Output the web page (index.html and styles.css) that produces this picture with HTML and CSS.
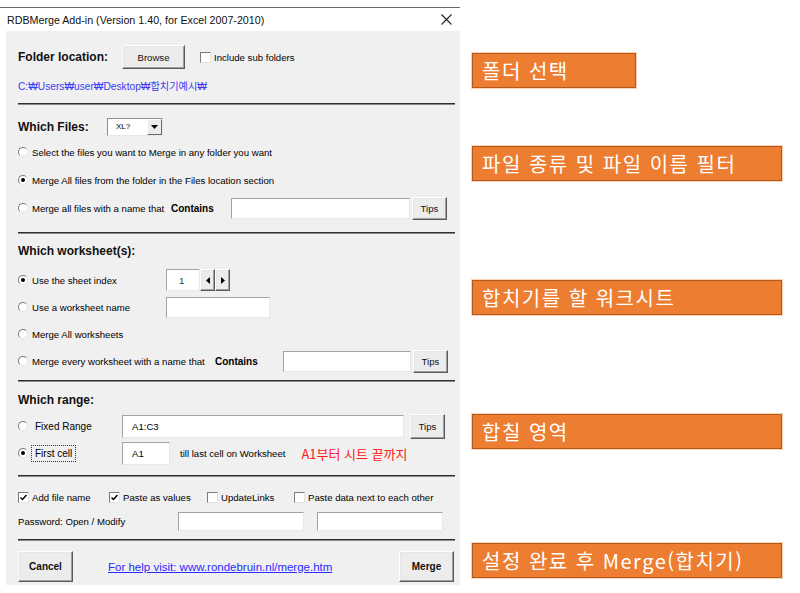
FILE: index.html
```html
<!DOCTYPE html>
<html lang="ko">
<head>
<meta charset="utf-8">
<title>RDBMerge Add-in</title>
<link rel="stylesheet" href="styles.css">
</head>
<body>
<div class="page">
  <div class="dialog">
    <div class="topstrip"></div>
    <div class="titlebar">
      <span class="title">RDBMerge Add-in (Version 1.40, for Excel 2007-2010)</span>
      <svg class="close" width="11" height="11" viewBox="0 0 11 11"><path d="M0.5 0.5 L10.5 10.5 M10.5 0.5 L0.5 10.5" stroke="#222" stroke-width="1.1" fill="none"/></svg>
    </div>
    <div class="client">
      <section class="sec s1">
        <div class="row r26">
          <span class="heading w-folder">Folder location:</span>
          <span class="btn browse">Browse</span>
          <span class="chk ml15"></span><span class="txt">Include sub folders</span>
        </div>
        <div class="row r30"><span class="path">C:₩Users₩user₩Desktop₩합치기예시₩</span></div>
      </section>
      <div class="sep"></div>

      <section class="sec s2">
        <div class="row r23">
          <span class="heading w-files">Which Files:</span>
          <span class="combo"><span class="combo-text">XL?</span><span class="combo-btn"><svg width="7" height="4" viewBox="0 0 7 4"><path d="M0 0 H7 L3.5 4 Z" fill="#000"/></svg></span></span>
        </div>
        <div class="row r28"><span class="radio"></span><span class="txt">Select the files you want to Merge in any folder you want</span></div>
        <div class="row r28"><span class="radio on"></span><span class="txt">Merge All files from the folder in the Files location section</span></div>
        <div class="row r28">
          <span class="radio"></span><span class="txt w-files-name">Merge all files with a name that</span>
          <span class="bold w-contains">Contains</span>
          <span class="input w-files-input"></span>
          <span class="btn tips">Tips</span>
        </div>
      </section>
      <div class="sep"></div>

      <section class="sec s3">
        <div class="row r22"><span class="heading">Which worksheet(s):</span></div>
        <div class="rows3">
          <div class="row r26">
            <span class="radio on"></span><span class="txt w-ws">Use the sheet index</span>
            <span class="input spin-input"><span class="num">1</span></span>
            <span class="btn spin"><svg width="4" height="7" viewBox="0 0 4 7"><path d="M4 0 V7 L0 3.5 Z" fill="#000"/></svg></span>
            <span class="btn spin"><svg width="4" height="7" viewBox="0 0 4 7"><path d="M0 0 V7 L4 3.5 Z" fill="#000"/></svg></span>
          </div>
          <div class="row r26">
            <span class="radio"></span><span class="txt w-ws">Use a worksheet name</span>
            <span class="input w-wsname"></span>
          </div>
          <div class="row r26"><span class="radio"></span><span class="txt">Merge All worksheets</span></div>
          <div class="row r26">
            <span class="radio"></span><span class="txt w-every">Merge every worksheet with a name that</span>
            <span class="bold w-contains2">Contains</span>
            <span class="input w-ws-input"></span>
            <span class="btn tips">Tips</span>
          </div>
        </div>
      </section>
      <div class="sep"></div>

      <section class="sec s4">
        <div class="row r22"><span class="heading">Which range:</span></div>
        <div class="row r26 mt2">
          <span class="radio"></span><span class="txt w-range pl3">Fixed Range</span>
          <span class="input w-fixed"><span class="val">A1:C3</span></span>
          <span class="btn tips tips-lg">Tips</span>
        </div>
        <div class="row r26 mt1">
          <span class="radio on"></span><span class="w-range"><span class="focus">First cell</span></span>
          <span class="input w-first"><span class="val">A1</span></span>
          <span class="txt ml10">till last cell on Worksheet</span>
          <span class="red">A1부터 시트 끝까지</span>
        </div>
      </section>
      <div class="sep"></div>

      <section class="sec s5">
        <div class="row r20">
          <span class="opt w-o1"><span class="chk checked"><svg width="7" height="7" viewBox="0 0 7 7"><path d="M0.5 3.5 L2.5 5.5 L6.5 1" stroke="#000" stroke-width="1.5" fill="none"/></svg></span><span class="txt">Add file name</span></span>
          <span class="opt w-o2"><span class="chk checked"><svg width="7" height="7" viewBox="0 0 7 7"><path d="M0.5 3.5 L2.5 5.5 L6.5 1" stroke="#000" stroke-width="1.5" fill="none"/></svg></span><span class="txt">Paste as values</span></span>
          <span class="opt w-o3"><span class="chk"></span><span class="txt">UpdateLinks</span></span>
          <span class="opt"><span class="chk"></span><span class="txt">Paste data next to each other</span></span>
        </div>
        <div class="row r20 mt4">
          <span class="txt w-pass">Password: Open / Modify</span>
          <span class="input w-pw"></span>
          <span class="input w-pw ml13"></span>
        </div>
      </section>
      <div class="sep"></div>

      <section class="sec s6">
        <div class="row r31">
          <span class="btn big cancel">Cancel</span>
          <span class="link">For help visit: www.rondebruin.nl/merge.htm</span>
          <span class="btn big merge">Merge</span>
        </div>
      </section>
    </div>
  </div>

  <div class="notes">
    <div class="note n1">폴더 선택</div>
    <div class="note n2">파일 종류 및 파일 이름 필터</div>
    <div class="note n3">합치기를 할 워크시트</div>
    <div class="note n4">합칠 영역</div>
    <div class="note n5">설정 완료 후 Merge(합치기)</div>
  </div>
</div>
</body>
</html>
```

FILE: styles.css
```css
* { box-sizing: border-box; }
html, body { margin: 0; padding: 0; background: #fff; }
body {
  font-family: "Liberation Sans", "Noto Sans CJK KR", sans-serif;
  color: #000;
}
.page { display: flex; width: 800px; height: 593px; overflow: hidden; }

/* dialog */
.dialog { width: 460px; flex: none; }
.topstrip { height: 8px; border-bottom: 1px solid #6a6a6a; }
.titlebar {
  height: 23px; display: flex; align-items: center; justify-content: space-between;
  padding: 0 8px 0 7px; background: #fff;
}
.title { font-family: "Liberation Sans", sans-serif; font-size: 10.7px; color: #111; }
.close { display: block; }
.client {
  margin-left: 6px; background: #f0f0f0; padding: 13px 5px 3px 12px;
  font-size: 9.6px;
}
.sep { height: 2px; background: #2e2e2e; border-bottom: 1px solid #8a8a8a; }
.row { display: flex; align-items: center; }
.r20 { height: 20px; } .r22 { height: 22px; } .r23 { height: 23px; }
.r26 { height: 26px; } .r28 { height: 28px; } .r30 { height: 30px; } .r31 { height: 31px; }
.mt1 { margin-top: 1px; } .mt2 { margin-top: 2px; } .mt4 { margin-top: 4px; }
.ml10 { margin-left: 10px; } .ml13 { margin-left: 13px; } .ml15 { margin-left: 15px; }
.pl3 { padding-left: 3px; }

.s1 { padding-bottom: 3px; }
.s2 { padding-top: 10px; padding-bottom: 10px; }
.s3 { padding-top: 6px; padding-bottom: 6px; }
.rows3 { margin-top: 5px; display: flex; flex-direction: column; gap: 1px; }
.s4 { padding-top: 7px; padding-bottom: 9px; }
.s5 { padding-top: 10px; padding-bottom: 8px; }
.s6 { padding-top: 10px; padding-bottom: 0; margin-right: -5px; padding-right: 6px; }

.heading { font-size: 12px; font-weight: bold; color: #111; }
.w-folder { width: 104px; }
.w-files { width: 89px; }
.bold { font-weight: bold; font-size: 10px; }
.txt { white-space: nowrap; }
.path { font-size: 10.2px; color: #3c3cf5; }

/* buttons */
.btn {
  display: inline-flex; align-items: center; justify-content: center;
  background: #ececec; border: 1px solid; border-color: #fff #5a5a5a #5a5a5a #fff;
  box-shadow: inset -1px -1px #a0a0a0, inset 1px 1px #e6e6e6;
  font-size: 9.6px; color: #111;
}
.browse { width: 63px; height: 24px; margin-left: 0; }
.tips { width: 35px; height: 23px; margin-left: 2px; }
.tips-lg { width: 35px; height: 25px; margin-left: 6px; }
.big { height: 31px; width: 55px; font-weight: bold; font-size: 10px; }
.merge { margin-left: auto; }
.link { margin-left: 35px; font-size: 11.5px; color: #2b2bff; text-decoration: underline; }

/* inputs */
.input {
  display: inline-flex; align-items: center; background: #fff;
  border: 1px solid; border-color: #a3a3a3 #e8e8e8 #e8e8e8 #a3a3a3;
  height: 21px;
}
.val { padding-left: 9px; font-size: 9.6px; }
.w-files-input { width: 179px; }
.w-contains { width: 60px; }
.w-files-name { width: 139px; }
.w-ws { width: 134px; }
.w-every { width: 183px; }
.w-contains2 { width: 68px; }
.w-ws-input { width: 128px; }
.w-wsname { width: 104px; }
.spin-input { width: 34px; height: 22px; }
.num { padding-left: 12px; font-size: 9.6px; color: #333; }
.spin { width: 15px; height: 22px; }
.w-range { width: 90px; font-size: 10px; }
.w-fixed { width: 282px; height: 23px; }
.w-first { width: 48px; height: 23px; }
.focus { outline: 1px dotted #333; padding: 2px 3px; }
.red { margin-left: 16px; color: #ff1a1a; font-family: "Noto Sans CJK KR", sans-serif; font-size: 13px; }

.combo {
  display: inline-flex; align-items: center; width: 56px; height: 18px;
  background: #fff; border: 1px solid; border-color: #8d8d8d #e8e8e8 #e8e8e8 #8d8d8d;
  justify-content: space-between;
}
.combo-text { font-size: 8px; padding-left: 8px; }
.combo-btn {
  width: 15px; height: 16px; display: inline-flex; align-items: center; justify-content: center;
  background: #ececec; border: 1px solid; border-color: #fff #6a6a6a #6a6a6a #fff;
}

/* radios and checkboxes */
.radio {
  width: 10px; height: 10px; border-radius: 50%; flex: none; margin-right: 4px;
  background: #fff; border: 1px solid; border-color: #7a7a7a #e2e2e2 #e2e2e2 #7a7a7a;
  position: relative;
}
.radio.on::after {
  content: ""; position: absolute; left: 2px; top: 2px; width: 4px; height: 4px;
  border-radius: 50%; background: #000;
}
.chk {
  width: 11px; height: 11px; flex: none; margin-right: 3px; background: #fff;
  border: 1px solid; border-color: #7a7a7a #e2e2e2 #e2e2e2 #7a7a7a;
  display: inline-flex; align-items: center; justify-content: center;
}
.opt { display: inline-flex; align-items: center; }
.w-o1 { width: 91px; }
.w-o2 { width: 98px; }
.w-o3 { width: 87px; }
.w-pass { width: 160px; }
.w-pw { width: 126px; height: 19px; }

/* annotations */
.notes { display: flex; flex-direction: column; align-items: flex-start; margin-left: 12px; }
.note {
  height: 35px; width: 310px; background: #ed7d31; border: 1px solid #b3591c;
  box-shadow: 0 0 0 1px rgba(237,125,49,0.35);
  color: #fff; font-family: "Noto Sans CJK KR", sans-serif; font-size: 20px;
  letter-spacing: 1.5px;
  display: flex; align-items: center; padding-left: 9px; white-space: nowrap;
}
.n1 { margin-top: 53px; width: 164px; }
.n2 { margin-top: 58px; }
.n3 { margin-top: 99px; }
.n4 { margin-top: 99px; }
.n5 { margin-top: 94px; }
```
